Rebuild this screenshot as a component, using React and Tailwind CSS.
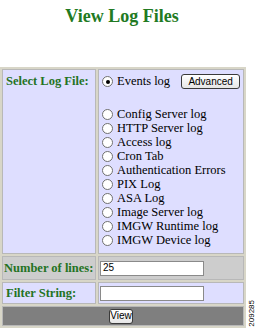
const serif = { fontFamily: '"Liberation Serif", "Times New Roman", serif' };

const Radio = ({ checked }) => (
  <span className="flex items-center justify-center w-[11px] h-[11px] rounded-full border border-[#707070] bg-white shrink-0">
    {checked && <span className="w-[4px] h-[4px] rounded-full bg-black" />}
  </span>
);

const LogOption = ({ label, checked }) => (
  <div className="flex items-center h-[14px] gap-[4px] whitespace-nowrap">
    <Radio checked={checked} />
    <span className="leading-none">{label}</span>
  </div>
);

const SmallButton = ({ children, className = "" }) => (
  <button
    className={`h-[15px] rounded-[3px] border border-[#3a3a3a] bg-gradient-to-b from-white to-[#e6e6e6] text-[10px] leading-none text-black shrink-0 ${className}`}
    style={{ fontFamily: '"Liberation Sans", Arial, sans-serif' }}
  >
    {children}
  </button>
);

const logs = [
  "Config Server log",
  "HTTP Server log",
  "Access log",
  "Cron Tab",
  "Authentication Errors",
  "PIX Log",
  "ASA Log",
  "Image Server log",
  "IMGW Runtime log",
  "IMGW Device log",
];

export default function App() {
  return (
    <div className="w-[259px] h-[331px] bg-white flex text-black" style={serif}>
      <div className="w-[246px] flex flex-col">
        <h1 className="text-center text-[18px] font-bold text-[#227a22] leading-[20px] pt-[6px] pr-[2px] h-[67px]">
          View Log Files
        </h1>
        <div className="border-2 border-[#d8d6c8] bg-[#d8d6c8] flex flex-col gap-[2px] text-[12.5px]">
          {/* log file selection */}
          <div className="flex gap-[2px] h-[185px]">
            <div className="w-[94px] bg-[#dedeff] border border-[#b8b8b8] pl-[3px] pt-[5px] font-bold text-[#247324] leading-none whitespace-nowrap">
              Select Log File:
            </div>
            <div className="flex-1 bg-[#dedeff] border border-[#b8b8b8] pl-[3px] pt-[3px]">
              <div className="flex items-center h-[17px] gap-[4px] mb-[17px] whitespace-nowrap">
                <Radio checked />
                <span className="leading-none">Events log</span>
                <SmallButton className="ml-[7px] w-[59px]">Advanced</SmallButton>
              </div>
              {logs.map((l) => (
                <LogOption key={l} label={l} />
              ))}
            </div>
          </div>
          {/* number of lines */}
          <div className="flex gap-[2px] h-[24px]">
            <div className="w-[94px] bg-[#cdcdcd] border border-[#b8b8b8] pl-[1px] flex items-center font-bold text-[#247324] whitespace-nowrap">
              Number of lines:
            </div>
            <div className="flex-1 bg-[#cdcdcd] border border-[#b8b8b8] pl-[1px] flex items-center">
              <div
                className="w-[104px] h-[15px] bg-white border border-[#8a8a8a] text-[10px] leading-none pl-[2px] flex items-center"
                style={{ fontFamily: '"Liberation Sans", Arial, sans-serif' }}
              >
                25
              </div>
            </div>
          </div>
          {/* filter string */}
          <div className="flex gap-[2px] h-[22px]">
            <div className="w-[94px] bg-[#dedeff] border border-[#b8b8b8] pl-[3px] flex items-center font-bold text-[#247324] whitespace-nowrap">
              Filter String:
            </div>
            <div className="flex-1 bg-[#dedeff] border border-[#b8b8b8] pl-[1px] flex items-center">
              <div className="w-[104px] h-[15px] bg-white border border-[#8a8a8a]" />
            </div>
          </div>
          {/* submit */}
          <div className="h-[20px] bg-[#7f7f7f] border border-[#b8b8b8] flex items-center justify-center pr-[4px]">
            <SmallButton className="w-[24px]">View</SmallButton>
          </div>
        </div>
      </div>
      <div className="flex-1 flex items-end justify-start pl-[2px] pb-[4px]">
        <span
          className="[writing-mode:vertical-rl] rotate-180 text-[8px] leading-none text-black"
          style={{ fontFamily: '"Liberation Sans", Arial, sans-serif' }}
        >
          209285
        </span>
      </div>
    </div>
  );
}
